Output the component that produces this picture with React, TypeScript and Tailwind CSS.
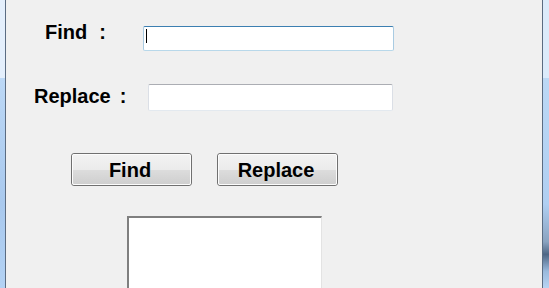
import React from "react";

const font = { fontFamily: '"Liberation Sans", Arial, sans-serif' };

function WinButton({ label }: { label: string }) {
  return (
    <button
      className="w-[121px] h-[33px] rounded-[3px] border border-[#707070] text-[20px] font-bold text-black leading-none"
      style={font}
    >
      <div className="w-full h-full rounded-[2px] border border-[#fcfcfc] bg-[linear-gradient(#f2f2f2_0%,#ebebeb_50%,#dddddd_50%,#cfcfcf_100%)] flex items-center justify-center pr-[3px] pt-[1px]">
        {label}
      </div>
    </button>
  );
}

export default function App() {
  return (
    <div className="w-[549px] h-[288px] overflow-hidden flex bg-[#f0f0f0]" style={font}>
      {/* left window frame */}
      <div className="w-[5px] h-full flex flex-col">
        <div className="h-[78px] bg-[#e4effc]" />
        <div className="flex-1 bg-[linear-gradient(#bcd8f6,#a9c9ee_60%,#b3d2f4)]" />
      </div>
      <div className="w-[1px] h-full bg-[#5b6c82]" />

      {/* client area */}
      <div className="flex-1 h-full bg-[#f0f0f0] flex flex-col">
        <div className="flex items-start pt-[22px]">
          <span className="ml-[39px] w-[98px] text-[20px] font-bold leading-none whitespace-pre text-black">
            Find<span className="ml-[12px]">:</span>
          </span>
          <div className="mt-[4px] w-[251px] h-[25px] bg-white border border-[#a9cbe2] border-t-[#3c7fb1] border-b-[#b8d8ea] rounded-[2px] pl-[2px] pt-[2px]">
            <div className="w-[1px] h-[14px] bg-black" />
          </div>
        </div>

        <div className="flex items-start mt-[33px]">
          <span className="ml-[28px] w-[114px] mt-[2px] text-[20px] font-bold leading-none whitespace-pre text-black">
            Replace<span className="ml-[9px]">:</span>
          </span>
          <div className="w-[245px] h-[27px] bg-white border border-[#dbdfe6] border-t-[#abadb3] border-b-[#e3e9ef] rounded-[2px]" />
        </div>

        <div className="flex mt-[42px] ml-[65px] gap-[25px]">
          <WinButton label="Find" />
          <WinButton label="Replace" />
        </div>

        <div className="mt-[30px] ml-[121px] w-[195px] h-[100px] bg-white border-t-2 border-l-2 border-t-[#7f7f7f] border-l-[#7f7f7f] border-r border-r-[#e3e3e3]" />
      </div>

      {/* right window frame */}
      <div className="w-[1px] h-full bg-[#5b6c82]" />
      <div className="w-[6px] h-full flex flex-col">
        <div className="h-[78px] bg-[#dcebfb]" />
        <div className="flex-1 bg-[linear-gradient(#bcd8f5,#b0cff2_60%,#8aa3c0_78%,#4f6785_84%,#9ab9dc_92%,#b7d4f3)]" />
      </div>
    </div>
  );
}
